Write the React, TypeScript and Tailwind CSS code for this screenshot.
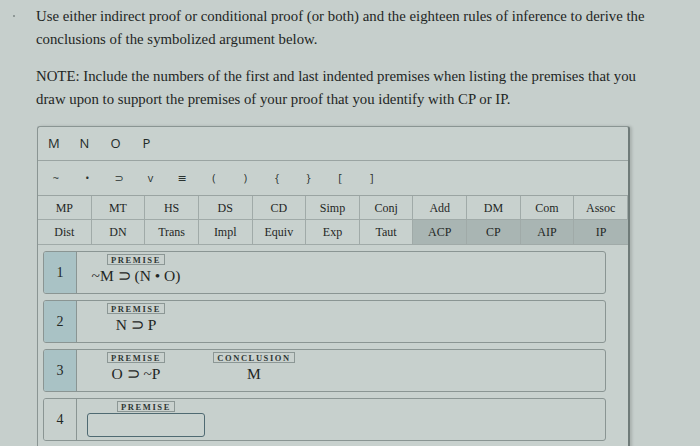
import React from "react";

const serif = "font-['Liberation_Serif','Times_New_Roman',serif]";
const sans = "font-['Open_Sans','DejaVu_Sans',sans-serif]";

const letters = ["M", "N", "O", "P"];
const symbols = ["~", "•", "⊃", "v", "≡", "(", ")", "{", "}", "[", "]"];
const rules1 = ["MP", "MT", "HS", "DS", "CD", "Simp", "Conj", "Add", "DM", "Com", "Assoc"];
const rules2 = ["Dist", "DN", "Trans", "Impl", "Equiv", "Exp", "Taut", "ACP", "CP", "AIP", "IP"];
const dark = ["ACP", "CP", "AIP", "IP"];

function Label({ text }: { text: string }) {
  return (
    <div className={`${serif} h-[11px] px-[3px] border border-[#8c9795] bg-[#c9d1ce] text-[8.5px] leading-[10px] font-bold tracking-[1.6px] text-[#2e3735]`}>
      {text}
    </div>
  );
}

function Cell({ label, children }: { label: string; children: React.ReactNode }) {
  return (
    <div className="flex flex-col items-center min-w-[98px]">
      <Label text={label} />
      {children}
    </div>
  );
}

function Formula({ text }: { text: string }) {
  return <div className={`${serif} text-[15.5px] leading-[22px] text-[#1f2725] whitespace-pre`}>{text}</div>;
}

function ProofLine({ n, shaded, children }: { n: number; shaded: boolean; children: React.ReactNode }) {
  return (
    <div className="flex h-[43px] border border-[#8a9593] rounded-[3px] overflow-hidden bg-[#c7d0cd]">
      <div className={`w-[33px] shrink-0 border-r border-[#8a9593] flex items-center justify-center ${serif} text-[14px] text-[#1f2725] ${shaded ? "bg-[#a9c2c5]" : "bg-[#c7d0cd]"}`}>
        {n}
      </div>
      <div className="flex gap-[20px] pl-[10px] pt-[2px]">{children}</div>
    </div>
  );
}

export default function App() {
  return (
    <div className="w-[700px] h-[446px] overflow-hidden bg-[#c6cfcc] relative">
      <span className="absolute left-[13px] top-[15px] w-[2px] h-[2px] rounded-full bg-[#7d8786]" />
      <div className={`${serif} text-[14.8px] leading-[23px] text-[#1e2624] ml-[36px] pt-[5px] w-[616px]`}>
        <p>Use either indirect proof or conditional proof (or both) and the eighteen rules of inference to derive the conclusions of the symbolized argument below.</p>
        <p className="mt-[14px]">NOTE: Include the numbers of the first and last indented premises when listing the premises that you draw upon to support the premises of your proof that you identify with CP or IP.</p>
      </div>

      <div className="ml-[37px] mt-[15px] w-[593px] h-[330px] border border-[#8a9593] border-r-[2px] border-r-[#6f7b79] rounded-t-[3px] bg-[#c8d1ce] shadow-[2px_0_3px_rgba(0,0,0,0.15)]">
        <div className={`${sans} h-[34px] flex items-center gap-[20px] pl-[10px] text-[13px] text-[#222a28] border-b border-[#9aa4a2]`}>
          {letters.map((l) => (
            <span key={l} className="w-[11px] text-center">{l}</span>
          ))}
        </div>
        <div className={`${sans} h-[35px] flex items-center pl-[2px] text-[11px] text-[#2a3230] border-b border-[#9aa4a2]`}>
          {symbols.map((s) => (
            <span key={s} className="w-[31.6px] text-center">{s}</span>
          ))}
        </div>
        <div className={`${serif} grid grid-cols-11 text-[12px] text-[#1f2725]`}>
          {rules1.map((r) => (
            <div key={r} className="h-[24px] flex items-center justify-center border-r border-b border-[#a0aaa8] last:border-r-0">{r}</div>
          ))}
          {rules2.map((r) => (
            <div key={r} className={`h-[25px] flex items-center justify-center border-r border-b border-[#a0aaa8] last:border-r-0 ${dark.includes(r) ? "bg-[#a9b5b3]" : ""}`}>{r}</div>
          ))}
        </div>

        <div className="flex flex-col gap-[6px] pl-[5px] pr-[22px] pt-[6px]">
          <ProofLine n={1} shaded>
            <Cell label="PREMISE"><Formula text="~M ⊃ (N • O)" /></Cell>
          </ProofLine>
          <ProofLine n={2} shaded>
            <Cell label="PREMISE"><Formula text="N ⊃ P" /></Cell>
          </ProofLine>
          <ProofLine n={3} shaded>
            <Cell label="PREMISE"><Formula text="O ⊃ ~P" /></Cell>
            <Cell label="CONCLUSION"><Formula text="M" /></Cell>
          </ProofLine>
          <ProofLine n={4} shaded={false}>
            <Cell label="PREMISE">
              <div className="mt-[1px] w-[118px] h-[24px] border-[1.5px] border-[#4f6a72] rounded-[3px] bg-[#c9d2cf]" />
            </Cell>
          </ProofLine>
        </div>
      </div>
    </div>
  );
}
